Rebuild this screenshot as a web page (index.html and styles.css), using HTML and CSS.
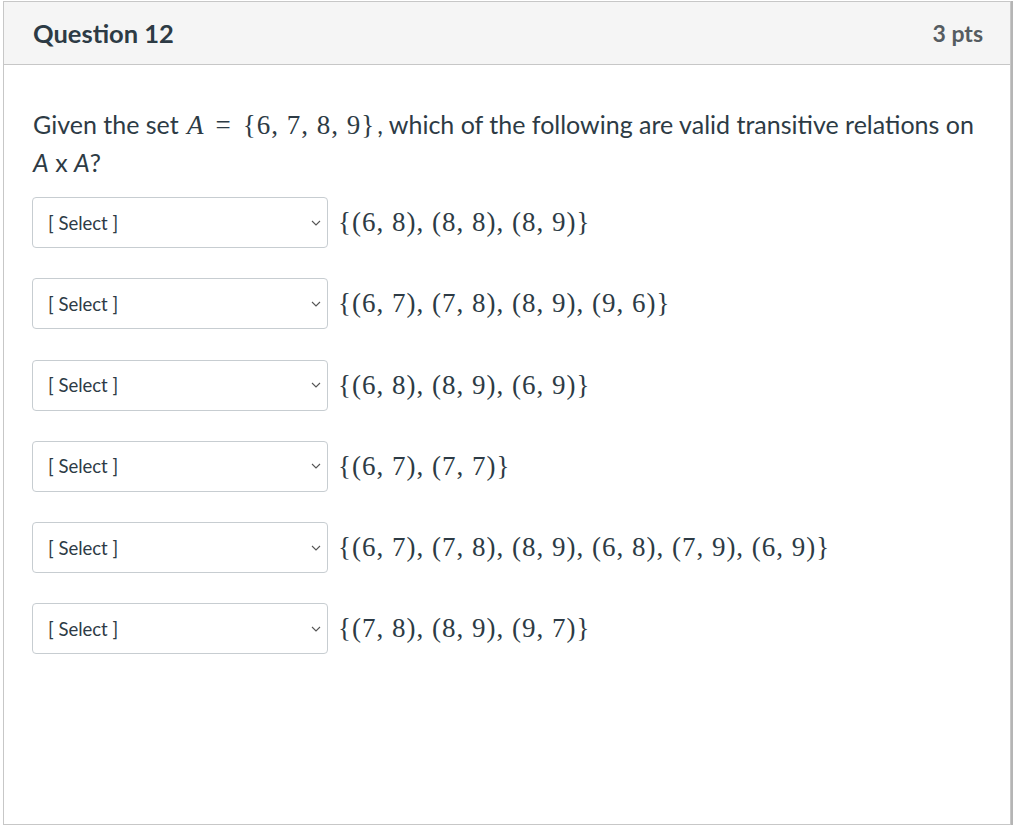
FILE: index.html
```html
<!DOCTYPE html>
<html>
<head>
<meta charset="utf-8">
<link rel="stylesheet" href="styles.css">
</head>
<body>
<div class="quiz">
  <div class="header">
    <h2 class="title">Question 12</h2>
    <span class="pts">3 pts</span>
  </div>
  <div class="content">
    <p class="prompt">Given the set <span class="math inline"><i>A</i><span class="rel">=</span>{6, 7, 8, 9}</span>, which of the following are valid transitive relations on <i>A</i> x <i>A</i>?</p>
    <div class="rows">
      <div class="row"><div class="select"><span>[ Select ]</span><svg class="chev" viewBox="0 0 10 6" width="10" height="6"><path d="M1 1 L5 5 L9 1" fill="none" stroke="#555" stroke-width="1.1"/></svg></div><span class="math big">{(6, 8), (8, 8), (8, 9)}</span></div>
      <div class="row"><div class="select"><span>[ Select ]</span><svg class="chev" viewBox="0 0 10 6" width="10" height="6"><path d="M1 1 L5 5 L9 1" fill="none" stroke="#555" stroke-width="1.1"/></svg></div><span class="math big">{(6, 7), (7, 8), (8, 9), (9, 6)}</span></div>
      <div class="row"><div class="select"><span>[ Select ]</span><svg class="chev" viewBox="0 0 10 6" width="10" height="6"><path d="M1 1 L5 5 L9 1" fill="none" stroke="#555" stroke-width="1.1"/></svg></div><span class="math big">{(6, 8), (8, 9), (6, 9)}</span></div>
      <div class="row"><div class="select"><span>[ Select ]</span><svg class="chev" viewBox="0 0 10 6" width="10" height="6"><path d="M1 1 L5 5 L9 1" fill="none" stroke="#555" stroke-width="1.1"/></svg></div><span class="math big">{(6, 7), (7, 7)}</span></div>
      <div class="row"><div class="select"><span>[ Select ]</span><svg class="chev" viewBox="0 0 10 6" width="10" height="6"><path d="M1 1 L5 5 L9 1" fill="none" stroke="#555" stroke-width="1.1"/></svg></div><span class="math big">{(6, 7), (7, 8), (8, 9), (6, 8), (7, 9), (6, 9)}</span></div>
      <div class="row"><div class="select"><span>[ Select ]</span><svg class="chev" viewBox="0 0 10 6" width="10" height="6"><path d="M1 1 L5 5 L9 1" fill="none" stroke="#555" stroke-width="1.1"/></svg></div><span class="math big">{(7, 8), (8, 9), (9, 7)}</span></div>
    </div>
  </div>
</div>
</body>
</html>
```
FILE: styles.css
```css
html, body {
  margin: 0;
  padding: 0;
  background: #fff;
}
body {
  font-family: Lato, "Liberation Sans", sans-serif;
  color: #2d3b45;
  padding: 1px 0 0 3px;
}
.quiz {
  width: 1006px;
  height: 822px;
  border: 1px solid #c7c7c7;
  box-shadow: 1px 1px 0 1px #b5b5b5;
  box-sizing: content-box;
}
.header {
  height: 62px;
  background: #f5f5f5;
  border-bottom: 1px solid #c7c7c7;
  display: flex;
  align-items: center;
  justify-content: space-between;
  padding: 0 27px 0 29px;
}
.title {
  margin: 0;
  font-size: 25.5px;
  font-weight: 700;
  color: #2d3b45;
}
.pts {
  font-size: 23px;
  font-weight: 700;
  color: #555c61;
}
.content {
  padding: 41px 29px 0 28px;
}
.prompt {
  margin: 0 0 0 1px;
  font-size: 25px;
  line-height: 37px;
}
.math {
  font-family: "Liberation Serif", "DejaVu Serif", serif;
  letter-spacing: 1px;
}
.inline {
  font-size: 27px;
  margin: 0 2px 0 2px;
}
.rel {
  margin: 0 11px;
}
.rows {
  margin-top: 16px;
  display: flex;
  flex-direction: column;
  gap: 30.3px;
}
.row {
  display: flex;
  align-items: center;
  gap: 10px;
}
.select {
  box-sizing: border-box;
  width: 296px;
  height: 51px;
  border: 1px solid #c7cdd1;
  border-radius: 4px;
  display: flex;
  align-items: center;
  justify-content: space-between;
  padding: 0 6px 0 15px;
  font-size: 18.5px;
  color: #2d3b45;
}
.chev {
  display: block;
}
.big {
  font-size: 27px;
}
```
